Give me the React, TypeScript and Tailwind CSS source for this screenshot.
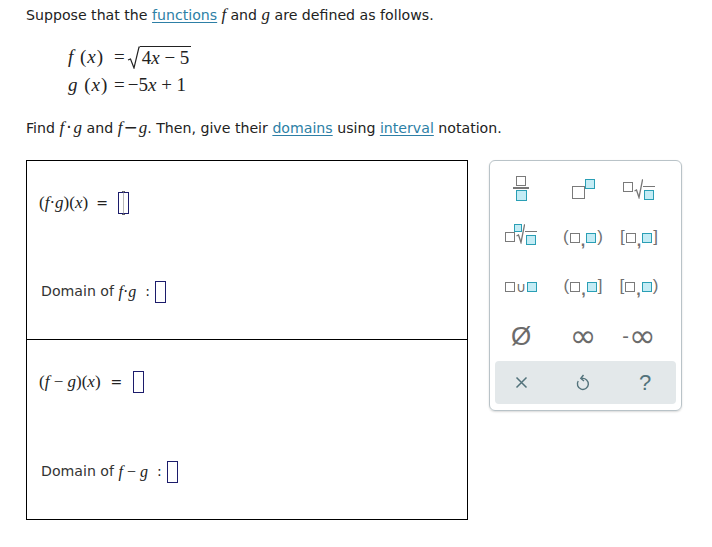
import React from "react";

const sans = { fontFamily: '"DejaVu Sans", Verdana, sans-serif' };
const serif = { fontFamily: '"Liberation Serif", "Times New Roman", serif' };
const lsans = { fontFamily: '"Liberation Sans", Arial, sans-serif' };

function I({ children }: { children: React.ReactNode }) {
  return <span className="italic" style={serif}>{children}</span>;
}

function G({ s = 10 }: { s?: number }) {
  return (
    <span
      className="inline-block border-[1.5px] border-[#7a7a7a] bg-white"
      style={{ width: s, height: s }}
    />
  );
}
function T({ s = 10 }: { s?: number }) {
  return (
    <span
      className="inline-block border-[1.5px] border-[#2a9fb5] bg-[#c4ecf5]"
      style={{ width: s, height: s }}
    />
  );
}

function Sqrt({ children }: { children: React.ReactNode }) {
  return (
    <span className="inline-flex items-end">
      <svg width="9" height="20" viewBox="0 0 9 20" className="mb-[1px]">
        <path d="M0.5 12 L2.5 11 L5 18.5 L8.5 1 L9 1" fill="none" stroke="#777" strokeWidth="1.3" />
      </svg>
      <span className="border-t-[1.3px] border-[#777] pt-[3px] pl-[1px] pr-[1px] flex">{children}</span>
    </span>
  );
}

function Interval({ l, r }: { l: string; r: string }) {
  return (
    <span className="flex items-center text-[#707070] text-[17px] leading-none" style={lsans}>
      <span className="mb-[2px]">{l}</span>
      <span className="ml-[1px]"><G /></span>
      <span className="mt-[6px] mx-[1px] text-[16px] leading-none font-bold">,</span>
      <span className="mr-[1px]"><T /></span>
      <span className="mb-[2px]">{r}</span>
    </span>
  );
}

function Btn({ children }: { children: React.ReactNode }) {
  return <div className="flex items-center justify-center h-[49px]">{children}</div>;
}

function InputBox({ focused = false }: { focused?: boolean }) {
  return (
    <span className="relative inline-block w-[11px] h-[22px] border border-[#1c1c6b] align-middle">
      {focused && (
        <>
          <span className="absolute left-[3px] -top-[2px] w-[3px] h-[1px] bg-[#666]" />
          <span className="absolute left-[4px] -top-[2px] w-[1px] h-[24px] bg-[#888] opacity-60" />
          <span className="absolute left-[3px] -bottom-[2px] w-[3px] h-[1px] bg-[#666]" />
        </>
      )}
    </span>
  );
}

export default function App() {
  return (
    <div className="w-[712px] h-[547px] bg-white text-[#222] text-[14.15px]" style={sans}>
      <div className="pl-[26px] pt-[4px]">
        <div className="h-[20px] leading-[20px]">
          Suppose that the{" "}
          <span className="text-[#2d7fa6] underline underline-offset-2">functions</span>
          <span className="text-[17px]"><I> f </I></span>and <span className="text-[17px]"><I>g</I></span> are defined as follows.
        </div>
        <div className="pl-[42px] pt-[19px] text-[19px] leading-[28px]" style={serif}>
          <div className="flex items-center">
            <span className="w-[46px] tracking-[1px]"><I>f</I> (<I>x</I>)</span>
            <span className="mr-[2px]">=</span>
            <span className="flex items-end">
              <svg width="13" height="23" viewBox="0 0 13 23">
                <path d="M1 14 L3.5 13 L7 22 L12 1 L13 1" fill="none" stroke="#222" strokeWidth="1.2" />
              </svg>
              <span className="border-t-[1.2px] border-[#222] leading-[22px] pr-[2px] pl-[2px]">4<I>x</I> − 5</span>
            </span>
          </div>
          <div className="flex items-center">
            <span className="w-[46px] tracking-[1px]"><I>g</I> (<I>x</I>)</span>
            <span className="mr-[3px]">=</span>
            <span>−5<I>x</I> + 1</span>
          </div>
        </div>
        <div className="mt-[18px] h-[20px] leading-[20px]">
          Find <span className="text-[17px]"><I>f</I><span className="mx-[2px]">·</span><I>g</I></span> and{" "}
          <span className="text-[17px]"><I>f</I><span className="mx-[1px]">−</span><I>g</I></span>. Then, give their{" "}
          <span className="text-[#2d7fa6] underline underline-offset-2">domains</span> using{" "}
          <span className="text-[#2d7fa6] underline underline-offset-2">interval</span> notation.
        </div>
      </div>

      <div className="flex mt-[23px] ml-[26px]">
        <div className="w-[442px] h-[360px] border border-black flex flex-col">
          <div className="h-[179px] border-b border-black pl-[12px] pt-[30px]">
            <div className="flex items-center h-[24px]">
              <span className="text-[17px]" style={serif}>
                (<I>f</I>·<I>g</I>)(<I>x</I>)
              </span>
              <span className="text-[14px] ml-[8px] mr-[10px]">=</span>
              <InputBox focused />
            </div>
            <div className="flex items-center h-[24px] mt-[65px] pl-[2px]">
              <span className="text-[#333]">Domain of&nbsp;</span>
              <span className="text-[16px]" style={serif}><I>f</I>·<I>g</I></span>
              <span className="ml-[9px] mr-[5px]">:</span>
              <InputBox />
            </div>
          </div>
          <div className="flex-1 pl-[12px] pt-[30px]">
            <div className="flex items-center h-[24px]">
              <span className="text-[17px]" style={serif}>
                (<I>f</I> − <I>g</I>)(<I>x</I>)
              </span>
              <span className="text-[14px] ml-[10px] mr-[11px]">=</span>
              <InputBox />
            </div>
            <div className="flex items-center h-[24px] mt-[66px] pl-[2px]">
              <span className="text-[#333]">Domain of&nbsp;</span>
              <span className="text-[16px]" style={serif}><I>f</I> − <I>g</I></span>
              <span className="ml-[9px] mr-[5px]">:</span>
              <InputBox />
            </div>
          </div>
        </div>

        <div className="ml-[21px] w-[193px] h-[251px] border border-[#b9c3c8] rounded-[6px] shadow-[0_1px_2px_rgba(0,0,0,0.15)] px-[5px] pt-[3px]">
          <div className="grid grid-cols-[52px_72px_40px]">
            <Btn>
              <span className="flex flex-col items-center gap-[1px]">
                <G />
                <span className="w-[16px] h-[1.5px] bg-[#777]" />
                <T s={11} />
              </span>
            </Btn>
            <Btn>
              <span className="flex items-start">
                <span className="mt-[7px] w-[13px] h-[13px] border-[1.5px] border-[#7a7a7a]" />
                <T />
              </span>
            </Btn>
            <Btn>
              <span className="flex items-end gap-[1px]">
                <span className="mb-[2px]"><G /></span>
                <Sqrt><T /></Sqrt>
              </span>
            </Btn>

            <Btn>
              <span className="flex items-end">
                <span className="mb-[2px]"><G /></span>
                <span className="relative ml-[1px]">
                  <span className="absolute -left-[2px] -top-[7px]"><T s={8} /></span>
                  <Sqrt><T /></Sqrt>
                </span>
              </span>
            </Btn>
            <Btn><Interval l="(" r=")" /></Btn>
            <Btn><Interval l="[" r="]" /></Btn>

            <Btn>
              <span className="flex items-center gap-[1px] text-[#6b6b6b] text-[14px] leading-none">
                <G />
                <span>∪</span>
                <T />
              </span>
            </Btn>
            <Btn><Interval l="(" r="]" /></Btn>
            <Btn><Interval l="[" r=")" /></Btn>

            <Btn>
              <span className="text-[26px] text-[#6b6b6b] leading-none" style={lsans}>Ø</span>
            </Btn>
            <Btn>
              <span className="text-[32px] text-[#6b6b6b] leading-none" style={sans}>∞</span>
            </Btn>
            <Btn>
              <span className="flex items-center text-[#6b6b6b] leading-none">
                <span className="text-[20px]" style={lsans}>-</span>
                <span className="text-[32px]" style={sans}>∞</span>
              </span>
            </Btn>
          </div>
          <div className="mt-[1px] h-[43px] bg-[#e3e8ea] rounded-[4px] grid grid-cols-[52px_72px_52px] items-center text-[#52727b]">
            <div className="flex justify-center">
              <svg width="13" height="13" viewBox="0 0 13 13">
                <path d="M1.5 1.5 L11.5 11.5 M11.5 1.5 L1.5 11.5" stroke="#52727b" strokeWidth="1.5" />
              </svg>
            </div>
            <div className="flex justify-center">
              <svg width="14" height="18" viewBox="0 0 14 18">
                <path d="M6 4.5 A5.5 5.5 0 1 1 2.2 7" fill="none" stroke="#52727b" strokeWidth="1.4" />
                <path d="M7.5 1 L4.8 4.5 L8 7" fill="none" stroke="#52727b" strokeWidth="1.4" />
              </svg>
            </div>
            <div className="flex justify-center text-[22px] leading-none" style={lsans}>?</div>
          </div>
        </div>
      </div>
    </div>
  );
}
